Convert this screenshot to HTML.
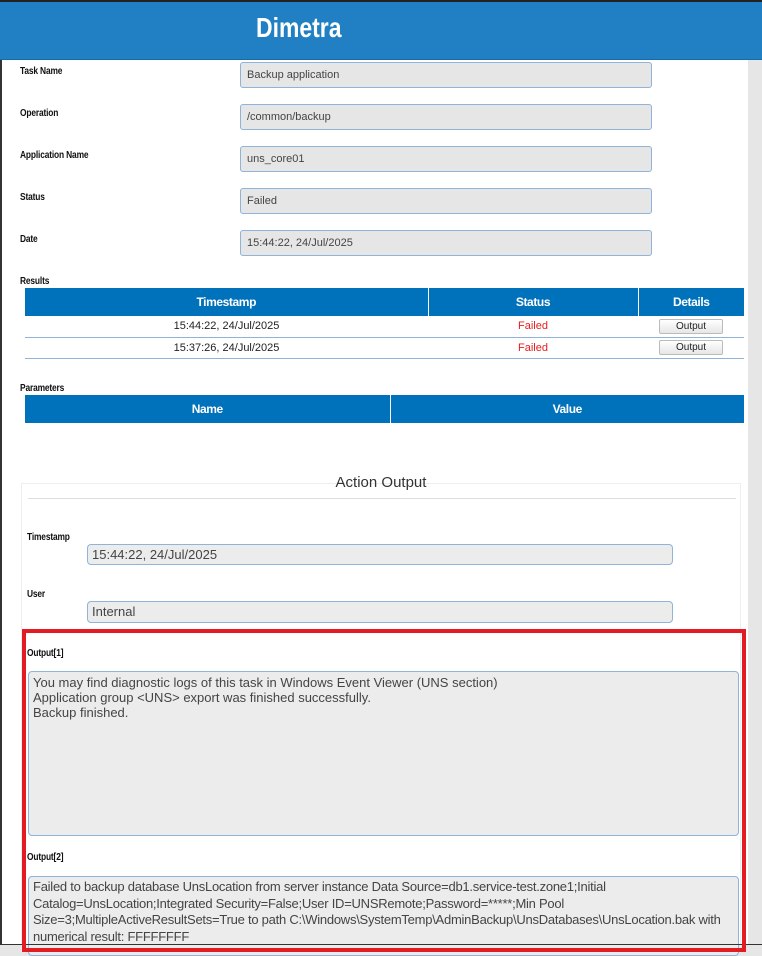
<!DOCTYPE html>
<html><head><style>
*{box-sizing:border-box}
body{margin:0;width:762px;height:954px;overflow:hidden;background:#e6e6e6;font-family:"Liberation Sans",sans-serif;position:relative}
.a{position:absolute}
.hdr{left:0;top:0;width:762px;height:60px;background:#2180c4;border-top:2px solid #222;border-bottom:1px solid #1a6aa8}
.hdr span{position:absolute;left:256px;top:10px;color:#fff;font-weight:bold;font-size:28px;transform:scaleX(0.82);transform-origin:left}
.main{left:2px;top:60px;width:746px;height:884px;background:#fff}
.lb{font-size:10.5px;color:#111;font-weight:bold;transform:scaleX(0.8);transform-origin:left;letter-spacing:-0.2px}
.in{background:#e6e6e6;border:1px solid #8fb3d9;border-radius:3px;font-size:11px;color:#444;padding:0 6px;line-height:24px;height:26px;width:412px;left:240px}
table{border-collapse:collapse;position:absolute;font-size:11px}
th{background:#0072bc;color:#fff;font-weight:bold;height:28px;border-right:1px solid #fff;font-size:12px;letter-spacing:-0.4px}
th:last-child{border-right:none}
td{text-align:center;height:21px;border-bottom:1px solid #8fb3d9;color:#222}
.f{color:#e81c1c}
.btn{display:inline-block;width:64px;height:15px;border:1px solid #bbb;border-radius:2px;background:linear-gradient(#fff,#e6e6e6);font-size:10px;line-height:13px}
.ta{background:#ececec;border:1px solid #8fb3d9;border-radius:4px;color:#444;font-size:13px;padding:2px 4px;line-height:15px}
</style></head><body>
<div class="a hdr"><span>Dimetra</span></div>
<div class="a" style="left:0;top:60px;width:2px;height:884px;background:#333"></div>
<div class="a main"></div>
<div class="a lb" style="left:20px;top:65px">Task Name</div><div class="a in" style="top:62px">Backup application</div>
<div class="a lb" style="left:20px;top:107px">Operation</div><div class="a in" style="top:104px">/common/backup</div>
<div class="a lb" style="left:20px;top:149px">Application Name</div><div class="a in" style="top:146px">uns_core01</div>
<div class="a lb" style="left:20px;top:191px">Status</div><div class="a in" style="top:188px">Failed</div>
<div class="a lb" style="left:20px;top:233px">Date</div><div class="a in" style="top:230px">15:44:22, 24/Jul/2025</div>
<div class="a lb" style="left:20px;top:275px">Results</div>
<table style="left:25px;top:288px;width:719px">
<tr><th style="width:403px">Timestamp</th><th style="width:210px">Status</th><th>Details</th></tr>
<tr><td>15:44:22, 24/Jul/2025</td><td class="f">Failed</td><td><span class="btn">Output</span></td></tr>
<tr><td>15:37:26, 24/Jul/2025</td><td class="f">Failed</td><td><span class="btn">Output</span></td></tr>
</table>
<div class="a lb" style="left:20px;top:382px">Parameters</div>
<table style="left:25px;top:395px;width:719px">
<tr><th style="width:365px">Name</th><th>Value</th></tr>
</table>
<div class="a" style="left:21px;top:483px;width:720px;height:470px;border:1px solid #eee;border-bottom:none"></div>
<div class="a" style="left:0;top:474px;width:762px;text-align:center;font-size:15px;color:#333">Action Output</div>
<div class="a" style="left:28px;top:498px;width:708px;height:1px;background:#ddd"></div>
<div class="a lb" style="left:27px;top:531px">Timestamp</div>
<div class="a ta" style="left:87px;top:544px;width:586px;height:21px">15:44:22, 24/Jul/2025</div>
<div class="a lb" style="left:27px;top:588px">User</div>
<div class="a ta" style="left:87px;top:601px;width:586px;height:22px">Internal</div>
<div class="a lb" style="left:27px;top:647px">Output[1]</div>
<div class="a ta" style="left:28px;top:671px;width:711px;height:165px;padding-top:3px">You may find diagnostic logs of this task in Windows Event Viewer (UNS section)<br>Application group &lt;UNS&gt; export was finished successfully.<br>Backup finished.</div>
<div class="a lb" style="left:27px;top:851px">Output[2]</div>
<div class="a ta" style="left:28px;top:876px;width:711px;height:80px;padding-top:2px;font-size:13px;line-height:16.5px;letter-spacing:-0.25px">Failed to backup database UnsLocation from server instance Data Source=db1.service-test.zone1;Initial Catalog=UnsLocation;Integrated Security=False;User ID=UNSRemote;Password=*****;Min Pool Size=3;MultipleActiveResultSets=True to path C:\Windows\SystemTemp\AdminBackup\UnsDatabases\UnsLocation.bak with numerical result: FFFFFFFF</div>
<div class="a" style="left:0;top:944px;width:762px;height:1px;background:#333"></div>
<div class="a" style="left:22px;top:629px;width:724px;height:323px;border:4px solid #e31b23;z-index:5"></div>
</body></html>
